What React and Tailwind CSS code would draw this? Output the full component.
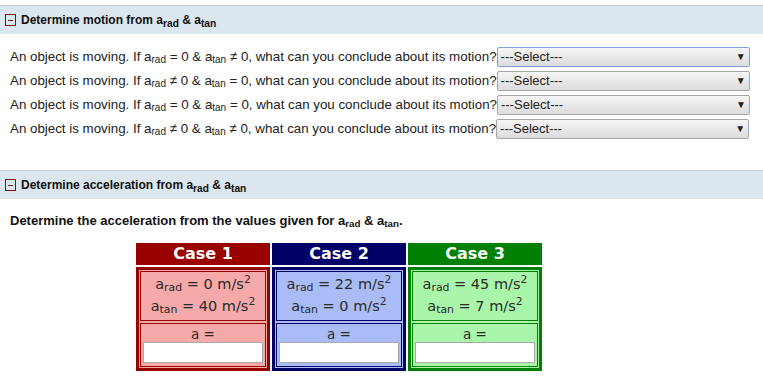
import React from "react";

function MinusIcon() {
  return (
    <span className="inline-flex w-[11px] h-[12px] border border-[#7a1010] items-center justify-center shrink-0">
      <span className="block w-[5px] h-px bg-[#7a1010]" />
    </span>
  );
}

function Sec({ title }) {
  return (
    <div className="h-[29px] border-t border-[#c9c9c9] bg-[#dce6ef] flex items-center pl-[5px] gap-[5px] font-bold text-[12px] text-[#111]">
      <MinusIcon />
      <span>{title}</span>
    </div>
  );
}

const A = ({ s }) => (
  <span>
    a<sub>{s}</sub>
  </span>
);

const AH = ({ s }) => (
  <span>
    a<sub className="text-[0.85em]">{s}</sub>
  </span>
);

function Row({ r, t, focus }) {
  return (
    <div className="h-[24px] flex items-center whitespace-nowrap">
      <span>
        An object is moving. If <A s="rad" /> {r} 0 &amp; <A s="tan" /> {t} 0, what can you conclude about its motion?
      </span>
      <div className="relative">
        <select
          className={
            "appearance-none h-[20px] w-[253px] rounded-[2px] border bg-linear-to-b from-[#f6f6f6] to-[#dcdcdc] text-[13px] text-[#222] pl-[3px] leading-[18px] font-['Liberation_Sans'] " +
            (focus ? "border-[#7da2dd]" : "border-[#a6a6a6]")
          }
          defaultValue=""
        >
          <option value="">---Select---</option>
        </select>
        <span className="absolute right-[4px] top-[4px] text-[10px] leading-[12px] text-[#222] pointer-events-none">▼</span>
      </div>
    </div>
  );
}

function Case({ n, head, body, rad, tan }) {
  return (
    <div className="w-[134px] flex flex-col gap-[2px] font-['DejaVu_Sans'] text-[#2a2a2a]">
      <div className={"h-[22px] flex items-center justify-center text-white font-bold text-[16px] " + head}>Case {n}</div>
      <div className={"border-[3px] p-px flex flex-col gap-[2px] " + body}>
        <div className={"h-[50px] border flex flex-col items-center justify-center text-[14.5px] leading-[22px] pb-[3px] " + body}>
          <div>
            <A s="rad" /> = {rad} m/s<sup>2</sup>
          </div>
          <div>
            <A s="tan" /> = {tan} m/s<sup>2</sup>
          </div>
        </div>
        <div className={"h-[44px] border flex flex-col items-center pt-[4px] text-[13.5px] leading-[13px] " + body}>
          <div>a =</div>
          <input className="mt-px w-[120px] h-[21px] bg-white border border-[#a9a9a9] outline-none" />
        </div>
      </div>
    </div>
  );
}

export default function App() {
  return (
    <div className="w-[763px] h-[392px] bg-white overflow-hidden font-['Liberation_Sans'] text-[13.33px] text-[#222]">
      <div className="h-[5px]" />
      <Sec
        title={
          <>
            Determine motion from <AH s="rad" /> &amp; <AH s="tan" />
          </>
        }
      />
      <div className="pl-[10px] pt-[11px]">
        <Row r="=" t="≠" focus />
        <Row r="≠" t="=" />
        <Row r="=" t="=" />
        <Row r="≠" t="≠" />
      </div>
      <div className="h-[29px]" />
      <Sec
        title={
          <>
            Determine acceleration from <AH s="rad" /> &amp; <AH s="tan" />
          </>
        }
      />
      <div className="pl-[10px] mt-[14px] h-[16px] leading-[16px] font-bold text-[13px] text-[#111]">
        Determine the acceleration from the values given for <A s="rad" /> &amp; <A s="tan" />.
      </div>
      <div className="ml-[136px] mt-[14px] flex gap-[2px]">
        <Case n={1} head="bg-[#990000]" body="bg-[#f5a9a9] border-[#990000]" rad="0" tan="40" />
        <Case n={2} head="bg-[#000066]" body="bg-[#a9bcf5] border-[#000066]" rad="22" tan="0" />
        <Case n={3} head="bg-[#008000]" body="bg-[#a9f5a9] border-[#008000]" rad="45" tan="7" />
      </div>
    </div>
  );
}
